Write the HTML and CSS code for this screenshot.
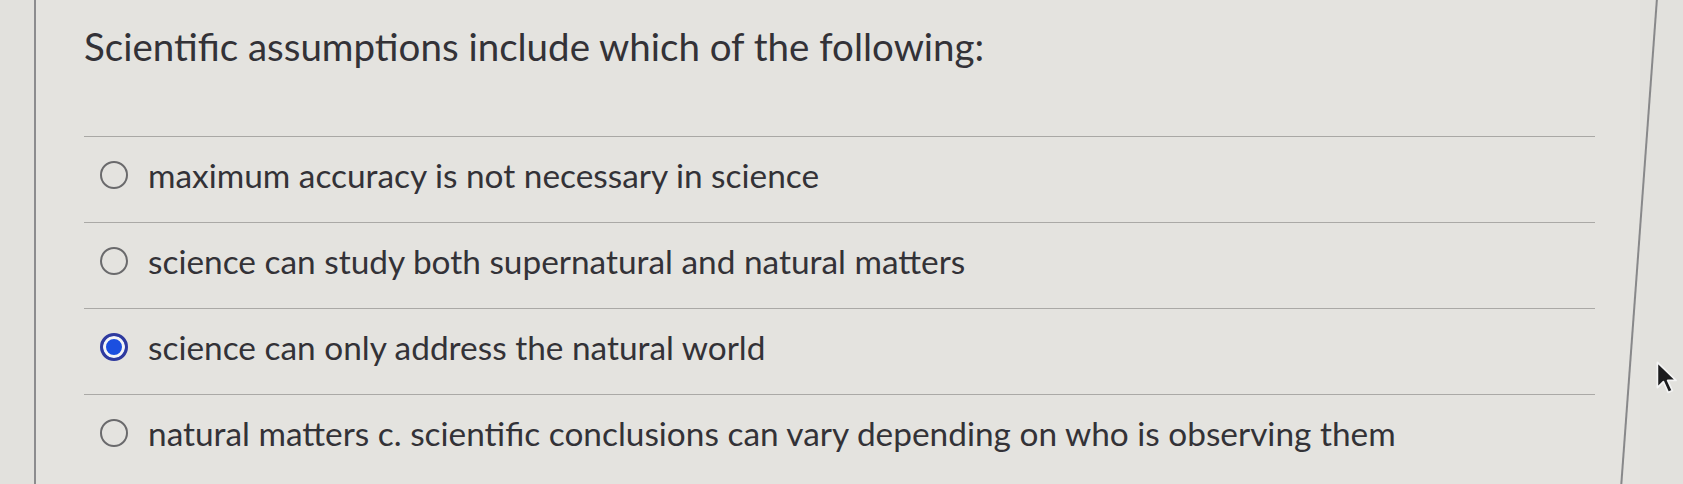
FILE: index.html
```html
<!DOCTYPE html>
<html lang="en">
<head>
<meta charset="utf-8">
<title>Question</title>
<link rel="stylesheet" href="styles.css">
</head>
<body>
<div class="screen">
  <div class="card">
    <h1 class="question">Scientific assumptions include which of the following:</h1>
    <ul class="options">
      <li class="option"><span class="radio"></span><span class="label">maximum accuracy is not necessary in science</span></li>
      <li class="option"><span class="radio"></span><span class="label">science can study both supernatural and natural matters</span></li>
      <li class="option"><span class="radio checked"></span><span class="label">science can only address the natural world</span></li>
      <li class="option"><span class="radio"></span><span class="label">natural matters c. scientific conclusions can vary depending on who is observing them</span></li>
    </ul>
  </div>
  <svg class="cursor" width="24" height="36" viewBox="0 0 20 30" aria-hidden="true">
    <path d="M2 2 L2 23 L7 18 L11 27 L14.5 25.5 L10.5 17 L17.5 17 Z" fill="#1c1c1e" stroke="#f4f4f4" stroke-width="1.4" stroke-linejoin="round"/>
  </svg>
</div>
</body>
</html>
```

FILE: styles.css
```css
html, body {
  margin: 0;
  padding: 0;
}

body {
  background: #e2e1dd;
  font-family: Lato, "Open Sans", sans-serif;
  color: #333237;
  overflow: hidden;
}

.screen {
  position: relative;
  width: 1683px;
  height: 484px;
  padding-left: 34px;
  box-sizing: border-box;
  background: #e2e1dd;
}

.card {
  position: relative;
  width: 1606px;
  height: 484px;
  box-sizing: border-box;
  border-left: 2px solid #8c8c8e;
  background: #e4e3df;
  padding: 23px 45px 0 48px;
}

.card::after {
  content: "";
  position: absolute;
  top: -2px;
  right: -18px;
  width: 2px;
  height: 500px;
  background: #88888a;
  transform: rotate(4.2deg);
  transform-origin: top center;
}

.question {
  margin: 0;
  font-size: 38.5px;
  font-weight: 400;
  line-height: 46px;
  padding-bottom: 67px;
  border-bottom: 1.5px solid #a9a8a5;
}

.options {
  list-style: none;
  margin: 0;
  padding: 0;
}

.option {
  display: flex;
  align-items: center;
  gap: 20px;
  padding: 18px 0 27px 16px;
  border-bottom: 1.5px solid #aaa9a6;
  font-size: 33.4px;
  line-height: 40px;
}

.option:last-child {
  border-bottom: none;
}

.radio {
  flex: none;
  width: 28px;
  height: 28px;
  box-sizing: border-box;
  border: 2.5px solid #6a6a6c;
  border-radius: 50%;
  margin-top: -1px;
}

.radio.checked {
  border: 3px solid #2f3a9e;
  background: #1b4fe0;
  box-shadow: inset 0 0 0 3px #f4f4f6;
}

.label {
  white-space: nowrap;
}

.cursor {
  position: absolute;
  left: 1655px;
  top: 360px;
}
```
